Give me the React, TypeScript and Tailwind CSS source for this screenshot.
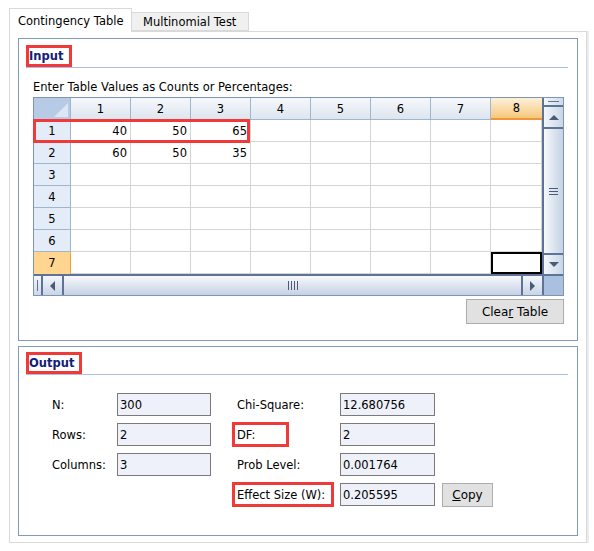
import React from 'react';

const colWidths = [60, 60, 60, 60, 60, 60, 60, 51];
const tableData: Record<number, string[]> = {
  1: ['40', '50', '65'],
  2: ['60', '50', '35'],
};

const Triangle = ({ dir }: { dir: 'up' | 'down' | 'left' | 'right' }) => {
  const pts = {
    up: '0,6 5,1 10,6',
    down: '0,1 10,1 5,6',
    left: '6,0 6,10 1,5',
    right: '1,0 1,10 6,5',
  }[dir];
  const vertical = dir === 'up' || dir === 'down';
  return (
    <svg width={vertical ? 10 : 7} height={vertical ? 7 : 10} viewBox={vertical ? '0 0 10 7' : '0 0 7 10'}>
      <polygon points={pts} fill="#4a5a78" />
    </svg>
  );
};

const VScroll = () => (
  <div className="flex w-[21px] flex-col border-l-2 border-[#5f7399] bg-[#5f7399]">
    <div className="flex h-[7px] items-center justify-center bg-linear-to-r from-[#f4f7fb] to-[#cfd9e8]">
      <div className="h-px w-[11px] bg-[#5f7399]" />
    </div>
    <div className="mt-[2px] flex h-[20px] items-center justify-center bg-linear-to-r from-[#f4f7fb] to-[#c9d5e6]">
      <Triangle dir="up" />
    </div>
    <div className="mt-[2px] flex flex-1 items-center justify-center bg-linear-to-r from-[#f7f9fc] to-[#c5d1e3]">
      <div className="flex flex-col gap-[2px]">
        <div className="h-px w-[9px] bg-[#4a5a78]" />
        <div className="h-px w-[9px] bg-[#4a5a78]" />
        <div className="h-px w-[9px] bg-[#4a5a78]" />
      </div>
    </div>
    <div className="mt-[2px] flex h-[19px] items-center justify-center bg-linear-to-r from-[#f4f7fb] to-[#c9d5e6]">
      <Triangle dir="down" />
    </div>
  </div>
);

const HScroll = () => (
  <div className="flex h-[21px] w-[508px] border-t-2 border-[#5f7399] bg-[#5f7399]">
    <div className="flex w-[7px] items-center justify-center bg-linear-to-b from-[#f4f7fb] to-[#cfd9e8]">
      <div className="h-[11px] w-px bg-[#5f7399]" />
    </div>
    <div className="ml-[2px] flex w-[19px] items-center justify-center bg-linear-to-b from-[#f4f7fb] to-[#c9d5e6]">
      <Triangle dir="left" />
    </div>
    <div className="ml-[2px] flex flex-1 items-center justify-center bg-linear-to-b from-[#f7f9fc] to-[#c5d1e3]">
      <div className="flex gap-[2px]">
        <div className="h-[9px] w-px bg-[#4a5a78]" />
        <div className="h-[9px] w-px bg-[#4a5a78]" />
        <div className="h-[9px] w-px bg-[#4a5a78]" />
        <div className="h-[9px] w-px bg-[#4a5a78]" />
      </div>
    </div>
    <div className="ml-[2px] flex w-[19px] items-center justify-center bg-linear-to-b from-[#f4f7fb] to-[#c9d5e6]">
      <Triangle dir="right" />
    </div>
  </div>
);

const DataGrid = () => (
  <div className="relative flex w-[531px] flex-col border border-[#7f95b5] bg-white">
    <div className="flex">
      <div className="grid w-[508px] grid-cols-[37px_repeat(7,60px)_51px] auto-rows-[22px] overflow-hidden">
        {/* corner */}
        <div className="relative border-r border-b border-[#9eb6ce] bg-[#b7cae6]">
          <svg className="absolute right-[2px] bottom-[2px]" width="14" height="14" viewBox="0 0 14 14">
            <polygon points="14,0 14,14 0,14" fill="#dce6f4" />
          </svg>
        </div>
        {colWidths.map((_, i) =>
          i === 7 ? (
            <div
              key={i}
              className="flex items-center justify-center border-b-2 border-[#f29536] bg-linear-to-b from-[#fdf0da] to-[#f5c87a]"
            >
              {i + 1}
            </div>
          ) : (
            <div
              key={i}
              className="flex items-center justify-center border-r border-b border-[#9eb6ce] bg-linear-to-b from-[#f6f8fb] to-[#dde5ef]"
            >
              {i + 1}
            </div>
          )
        )}
        {[1, 2, 3, 4, 5, 6, 7].map((r) => (
          <React.Fragment key={r}>
            <div
              className={
                r === 7
                  ? 'flex items-center justify-center border-r border-r-[#f0a040] bg-[#ffd58f]'
                  : 'flex items-center justify-center border-r border-b border-[#9eb6ce] bg-[#e4ecf7]'
              }
            >
              {r}
            </div>
            {colWidths.map((_, c) => (
              <div
                key={c}
                className={
                  r === 7 && c === 7
                    ? 'border-2 border-black'
                    : 'flex items-center justify-end border-r border-b border-[#d4d4d4] pr-[3px]'
                }
              >
                {tableData[r]?.[c] ?? ''}
              </div>
            ))}
          </React.Fragment>
        ))}
      </div>
      <VScroll />
    </div>
    <div className="flex">
      <HScroll />
      <div className="flex-1 border-t-2 border-l-2 border-[#5f7399] bg-[#a9c0e0]" />
    </div>
    {/* highlight around the first row */}
    <div className="pointer-events-none absolute top-[21px] -left-px h-[24px] w-[217px] border-[3px] border-[#f03a3a]" />
  </div>
);

const ValueBox = ({ value, w }: { value: string; w: string }) => (
  <div className={`flex h-[23px] items-center border border-[#7a7a7a] bg-[#eef1f9] pl-[2px] ${w}`}>{value}</div>
);

const Heading = ({ title, w }: { title: string; w: string }) => (
  <div className="flex flex-col pl-[7px] pr-[9px]">
    <div className={`flex h-[22px] items-center border-[3px] border-[#f03a3a] font-bold text-[#10207a] ${w}`}>
      {title}
    </div>
    <div className="h-px bg-[#aabee7]" />
  </div>
);

const Label = ({ text, boxed, w }: { text: string; boxed?: boolean; w?: string }) =>
  boxed ? (
    <div className="flex h-[23px] items-center">
      <div className={`flex h-[25px] items-center border-[3px] border-[#f03a3a] pl-[2px] ${w ?? ''}`}>{text}</div>
    </div>
  ) : (
    <div className="flex h-[23px] items-center pl-[5px]">{text}</div>
  );

export default function App() {
  return (
    <div className="h-[551px] w-[594px] bg-white font-['DejaVu_Sans',sans-serif] text-[11.5px] leading-[14px] text-black">
      {/* tab strip */}
      <div className="flex items-end pt-[8px] pl-[9px]">
        <div className="relative z-10 -mb-px flex h-[24px] w-[123px] items-center border border-b-0 border-[#d9d9d9] bg-white pl-[8px]">
          Contingency Table
        </div>
        <div className="flex h-[19px] w-[117px] items-center border border-l-0 border-[#d9d9d9] bg-[#f0f0f0] pl-[11px]">
          Multinomial Test
        </div>
      </div>

      {/* tab page */}
      <div className="ml-[9px] h-[512px] w-[578px] border border-[#d9d9d9] bg-white pt-[6px] pl-[8px] shadow-[2px_0_0_#ececec]">
        {/* input group */}
        <div className="flex h-[303px] w-[560px] flex-col border border-[#7f9db9] pt-[6px]">
          <Heading title="Input" w="w-[46px]" />
          <div className="mt-[12px] pl-[14px]">Enter Table Values as Counts or Percentages:</div>
          <div className="mt-[3px] pl-[14px]">
            <DataGrid />
          </div>
          <div className="mt-[3px] flex w-[545px] justify-end">
            <button className="h-[25px] w-[98px] border border-[#adadad] bg-[#e1e1e1] text-[12px]">
              Clea<span className="underline">r</span> Table
            </button>
          </div>
        </div>

        {/* output group */}
        <div className="mt-[5px] flex h-[190px] w-[560px] flex-col border border-[#7f9db9] pt-[5px]">
          <Heading title="Output" w="w-[56px]" />
          <div className="mt-[18px] grid grid-cols-[65px_94px_21px_108px_95px_7px_51px] auto-rows-[23px] gap-y-[7px] pl-[33px]">
            <div className="flex items-center">N:</div>
            <ValueBox value="300" w="w-[94px]" />
            <div />
            <Label text="Chi-Square:" />
            <ValueBox value="12.680756" w="w-[95px]" />
            <div />
            <div />

            <div className="flex items-center">Rows:</div>
            <ValueBox value="2" w="w-[94px]" />
            <div />
            <Label text="DF:" boxed w="w-[57px]" />
            <ValueBox value="2" w="w-[95px]" />
            <div />
            <div />

            <div className="flex items-center">Columns:</div>
            <ValueBox value="3" w="w-[94px]" />
            <div />
            <Label text="Prob Level:" />
            <ValueBox value="0.001764" w="w-[95px]" />
            <div />
            <div />

            <div />
            <div />
            <div />
            <Label text="Effect Size (W):" boxed w="w-[102px]" />
            <ValueBox value="0.205595" w="w-[95px]" />
            <div />
            <button className="h-[24px] w-[51px] border border-[#adadad] bg-[#e1e1e1] text-[12px]">
              <span className="underline">C</span>opy
            </button>
          </div>
        </div>
      </div>
    </div>
  );
}
